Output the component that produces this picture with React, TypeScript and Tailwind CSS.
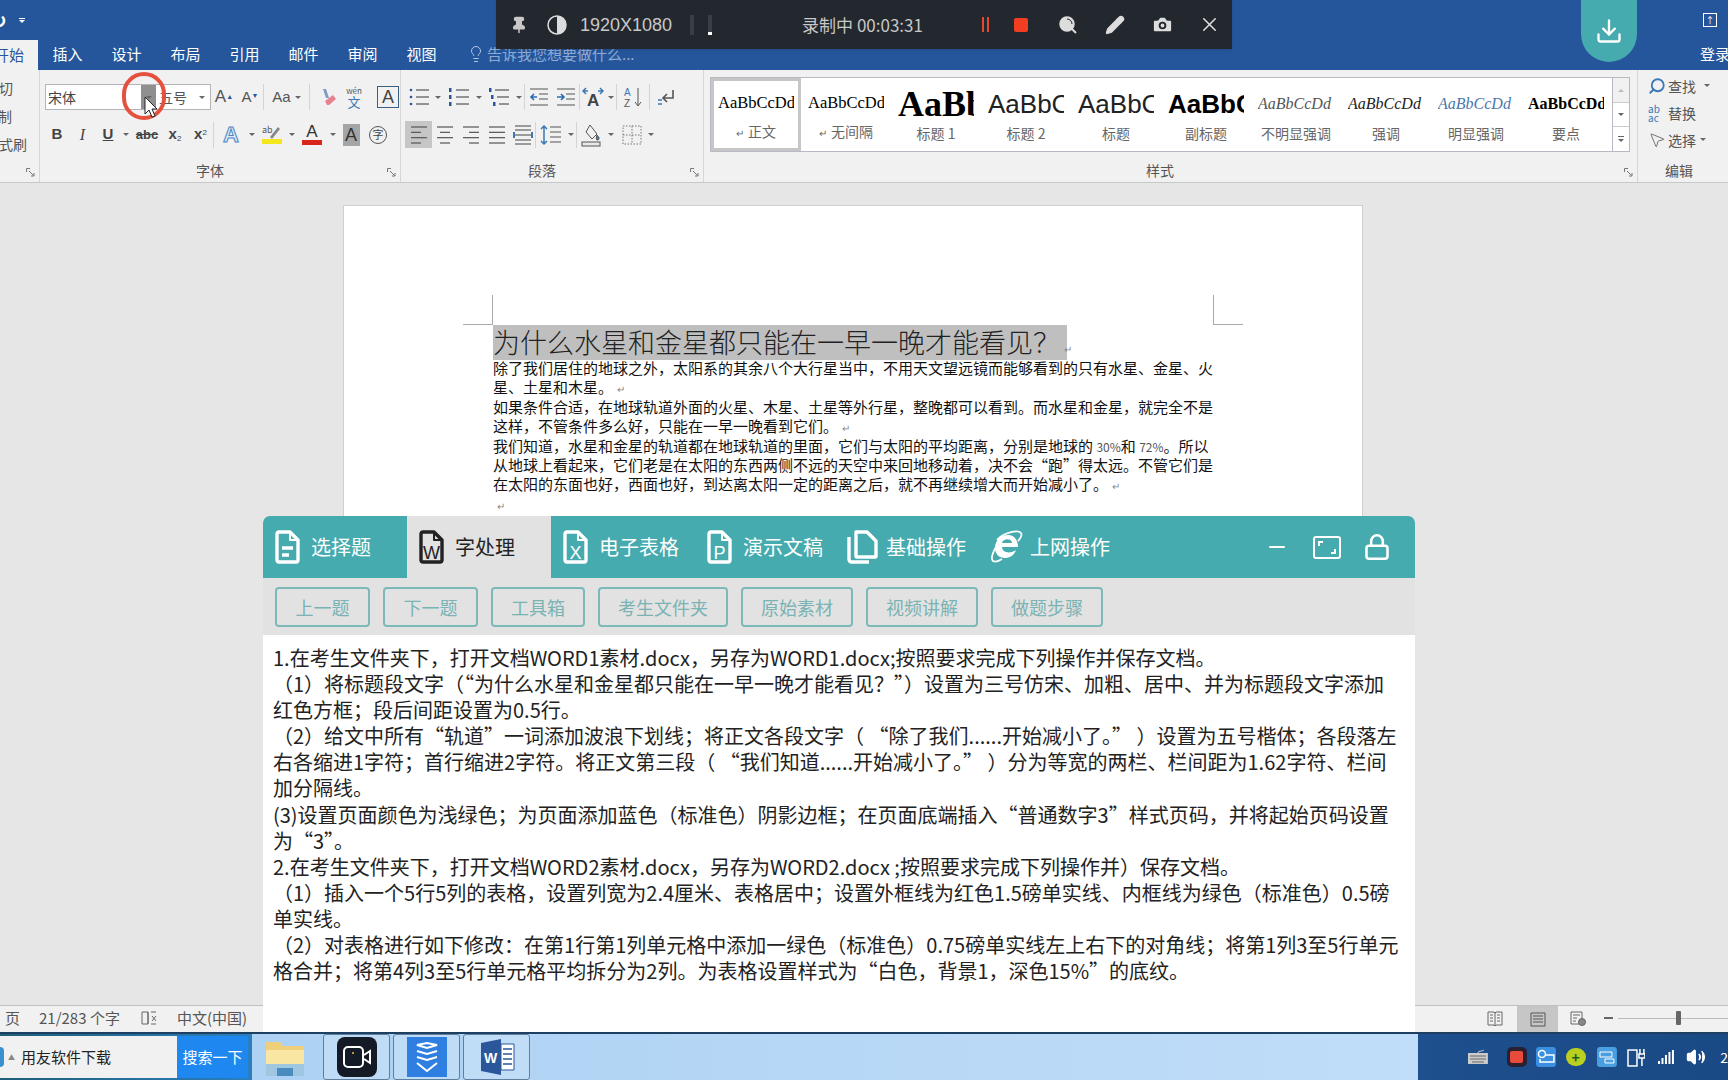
import type { ReactNode } from "react";
import { Search, Pencil, Camera, X, Lightbulb, Minus, Lock, Download, MousePointer2, Pin, Volume2 } from "lucide-react";

const CJK = "font-['Noto_Sans_CJK_SC','Liberation_Sans',sans-serif]";

function Cell({ w, children, className = "" }: { w: string; children?: ReactNode; className?: string }) {
  return <span className={`flex h-full shrink-0 items-center justify-center ${w} ${className}`}>{children}</span>;
}

function Caret({ className = "" }: { className?: string }) {
  return <span className={`inline-block h-0 w-0 border-x-[3px] border-t-[3px] border-x-transparent border-t-[#666] ${className}`} />;
}

function Sep() {
  return <span className="h-[26px] w-px shrink-0 bg-[#d4d4d4]" />;
}

function Launcher() {
  return (
    <svg width="9" height="9" viewBox="0 0 9 9" fill="none" stroke="#777" strokeWidth="1" className="absolute bottom-[5px] right-[4px]">
      <path d="M.5 4V.5H4M3 3l4.5 4.500M8 5v3H5" />
    </svg>
  );
}

// horizontal text lines, used by the paragraph buttons
function Lines({ xs, color = "#555" }: { xs: [number, number][]; color?: string }) {
  const step = 16 / (xs.length - 1);
  return (
    <svg width="20" height="18" viewBox="0 0 20 18" stroke={color} strokeWidth="1.2">
      {xs.map(([a, b], i) => (
        <line key={i} x1={a} x2={b} y1={1 + i * step} y2={1 + i * step} />
      ))}
    </svg>
  );
}

function ListIcon({ kind }: { kind: "dot" | "num" | "multi" }) {
  return (
    <svg width="22" height="20" viewBox="0 0 22 20" stroke="#555" strokeWidth="1.2" fill="#2b579a">
      {[3, 10, 17].map((y, i) => (
        <g key={y}>
          <line x1={kind === "multi" ? 7 + i * 2 : 8} x2="21" y1={y} y2={y} />
          {kind === "dot" && <circle cx="3" cy={y} r="1.3" stroke="none" />}
          {kind !== "dot" && <rect x={1 + (kind === "multi" ? i * 2 : 0)} y={y - 2} width="2.5" height="4" stroke="none" />}
        </g>
      ))}
    </svg>
  );
}

function IndentIcon({ flip }: { flip?: boolean }) {
  return (
    <svg width="20" height="18" viewBox="0 0 20 18" stroke="#555" strokeWidth="1.2">
      <path d="M1 1h18M10 6h9M10 11h9M1 17h18" />
      <path d={flip ? "M1 9h6M5 6l3 3-3 3" : "M2 9h6M5 6L2 9l3 3"} stroke="#2b6cb0" strokeWidth="1.6" fill="none" />
    </svg>
  );
}

function FontGroup() {
  return (
    <div className="relative flex w-[361px] shrink-0 flex-col border-r border-[#d6d6d6] pl-[5px] pt-[14px]">
      <div className="flex h-[26px] items-center text-[#555]">
        <div className="flex h-[26px] w-[166px] border border-[#b4b4b4] bg-white">
          <span className="flex w-[95px] items-center pl-[2px] text-[14px] text-[#444]">宋体</span>
          <span className="flex w-[15px] items-center justify-center bg-[#8f8f8f]"><Caret className="border-t-[#333]" /></span>
          <span className="flex flex-1 items-center justify-between pl-[3px] pr-[5px] text-[14px] text-[#555]">五号<Caret /></span>
        </div>
        <Cell w="w-[26px]"><span className="font-['Liberation_Sans'] text-[17px]">A<sup className="text-[7px] text-[#2b579a]">▲</sup></span></Cell>
        <Cell w="w-[26px]"><span className="font-['Liberation_Sans'] text-[15px]">A<sup className="text-[7px] text-[#2b579a]">▼</sup></span></Cell>
        <Sep />
        <Cell w="w-[45px]"><span className="font-['Liberation_Sans'] text-[15px]">Aa</span><Caret className="ml-1" /></Cell>
        <Sep />
        <Cell w="w-[36px]">
          <svg width="20" height="20" viewBox="0 0 20 20"><path d="M5 2h3l3 9H8z" fill="#7a9cc6" /><path d="M7 14l8-6 3 4-7 6H9z" fill="#e9808f" /></svg>
        </Cell>
        <Cell w="w-[16px]">
          <span className="flex flex-col items-center leading-none"><span className="text-[8px] text-[#555]">wén</span><span className="text-[13px] text-[#3b78b5]">文</span></span>
        </Cell>
        <Cell w="w-[15px]" />
        <span className="flex h-[22px] w-[22px] items-center justify-center border border-[#3a5f80] font-['Liberation_Sans'] text-[18px] leading-none text-[#444]">A</span>
      </div>
      <div className="mt-[11px] flex h-[27px] items-center text-[#444]">
        <Cell w="w-[24px]"><b className="font-['Liberation_Sans'] text-[15px]">B</b></Cell>
        <Cell w="w-[27px]"><i className="font-['Liberation_Serif'] text-[16px]">I</i></Cell>
        <Cell w="w-[24px]"><span className="font-['Liberation_Sans'] text-[15px] font-bold underline">U</span></Cell>
        <Cell w="w-[12px]"><Caret /></Cell>
        <Cell w="w-[30px]"><span className="font-['Liberation_Sans'] text-[13px] font-bold line-through">abc</span></Cell>
        <Cell w="w-[26px]"><b className="font-['Liberation_Sans'] text-[15px]">x<sub className="text-[8px] font-normal">2</sub></b></Cell>
        <Cell w="w-[25px]"><b className="font-['Liberation_Sans'] text-[15px]">x<sup className="text-[8px] font-normal">2</sup></b></Cell>
        <Sep />
        <Cell w="w-[34px]"><span className="font-['Liberation_Sans'] text-[22px] font-bold leading-none text-[#dfeaf6] [-webkit-text-stroke:1px_#4a86c5]">A</span></Cell>
        <Cell w="w-[8px]"><Caret /></Cell>
        <Cell w="w-[32px]">
          <span className="flex flex-col items-center leading-none">
            <svg width="20" height="14" viewBox="0 0 20 14"><path d="M8 12l8-10 2 2-8 10z" fill="#888" /><text x="0" y="8" fontSize="9" fill="#555">ab</text></svg>
            <span className="h-[5px] w-[20px] bg-[#f5e71e]" />
          </span>
        </Cell>
        <Cell w="w-[8px]"><Caret /></Cell>
        <Cell w="w-[32px]">
          <span className="flex flex-col items-center leading-none">
            <span className="font-['Liberation_Sans'] text-[17px] leading-[16px] text-[#333]">A</span>
            <span className="h-[5px] w-[20px] bg-[#d9241c]" />
          </span>
        </Cell>
        <Cell w="w-[10px]"><Caret /></Cell>
        <Cell w="w-[26px]"><span className="flex h-[22px] w-[17px] items-center justify-center bg-[#a5a5a5] font-['Liberation_Sans'] text-[18px] leading-none text-[#333]">A</span></Cell>
        <Cell w="w-[28px]"><span className="flex h-[18px] w-[18px] items-center justify-center rounded-full border border-[#555] text-[11px] leading-none">字</span></Cell>
      </div>
      <span className="absolute bottom-[2px] left-[156px] text-[14px] leading-5 text-[#555]">字体</span>
      <Launcher />
    </div>
  );
}

function ParagraphGroup() {
  return (
    <div className="relative flex w-[303px] shrink-0 flex-col border-r border-[#d6d6d6] pl-[5px] pt-[14px]">
      <div className="flex h-[26px] items-center">
        <Cell w="w-[26px]"><ListIcon kind="dot" /></Cell>
        <Cell w="w-[12px]"><Caret /></Cell>
        <Cell w="w-[30px]"><ListIcon kind="num" /></Cell>
        <Cell w="w-[10px]"><Caret /></Cell>
        <Cell w="w-[30px]"><ListIcon kind="multi" /></Cell>
        <Cell w="w-[10px]"><Caret /></Cell>
        <Sep />
        <Cell w="w-[28px]"><IndentIcon /></Cell>
        <Cell w="w-[26px]"><IndentIcon flip /></Cell>
        <Sep />
        <Cell w="w-[26px]">
          <svg width="22" height="20" viewBox="0 0 22 20"><path d="M1 4h5M16 4h5M4 1L1 4l3 3M18 1l3 3-3 3" stroke="#3b78b5" strokeWidth="1.5" fill="none" /><text x="5" y="19" fontSize="17" fontWeight="700" fill="#444" fontFamily="Liberation Sans">A</text></svg>
        </Cell>
        <Cell w="w-[10px]"><Caret /></Cell>
        <Sep />
        <Cell w="w-[32px]">
          <svg width="22" height="22" viewBox="0 0 22 22"><text x="2" y="10" fontSize="10" fill="#3b78b5" fontFamily="Liberation Sans">A</text><text x="2" y="21" fontSize="10" fill="#555" fontFamily="Liberation Sans">Z</text><path d="M16 2v17M13 16l3 4 3-4" stroke="#555" fill="none" /></svg>
        </Cell>
        <Sep />
        <Cell w="w-[32px]">
          <svg width="20" height="18" viewBox="0 0 20 18" fill="none" stroke="#555" strokeWidth="1.6"><path d="M17 2v8H8M11 6l-4 4 4 4" /><path d="M2 12h4M2 16h4" stroke="#3b78b5" /></svg>
        </Cell>
      </div>
      <div className="-ml-[1px] mt-[11px] flex h-[27px] items-center">
        <Cell w="w-[27px]" className="bg-[#c6c6c6]"><Lines xs={[[2, 18], [2, 12], [2, 18], [2, 12]]} /></Cell>
        <Cell w="w-[25px]"><Lines xs={[[2, 18], [5, 15], [2, 18], [5, 15]]} /></Cell>
        <Cell w="w-[27px]"><Lines xs={[[2, 18], [8, 18], [2, 18], [8, 18]]} /></Cell>
        <Cell w="w-[26px]"><Lines xs={[[2, 18], [2, 18], [2, 18], [2, 18]]} /></Cell>
        <Cell w="w-[25px]">
          <svg width="20" height="22" viewBox="0 0 20 22" stroke="#444" fill="none"><path d="M2 2h16M2 6h16M2 16h16M2 20h16M2 11h16" /><path d="M1 8v6M19 8v6" stroke="#3b78b5" strokeWidth="2" /></svg>
        </Cell>
        <Sep />
        <Cell w="w-[30px]">
          <svg width="22" height="22" viewBox="0 0 22 22" fill="none" stroke="#555"><path d="M10 3h11M10 8h11M10 13h11M10 18h11" /><path d="M4 2v18M1 5l3-3 3 3M1 17l3 3 3-3" stroke="#3b78b5" strokeWidth="1.5" /></svg>
        </Cell>
        <Cell w="w-[10px]"><Caret /></Cell>
        <Sep />
        <Cell w="w-[28px]">
          <svg width="22" height="24" viewBox="0 0 22 24" fill="none" stroke="#555"><path d="M10 2l7 9-5 5-6-7z" /><path d="M17 12c2 2 3 4 1 5s-2-3-1-5" fill="#3b78b5" /><rect x="2" y="19" width="18" height="4" fill="#e8e8e8" /></svg>
        </Cell>
        <Cell w="w-[12px]"><Caret /></Cell>
        <Cell w="w-[30px]">
          <svg width="20" height="20" viewBox="0 0 20 20" stroke="#777" strokeDasharray="1.5 1.5" fill="none"><rect x="1" y="1" width="18" height="18" /><path d="M1 10h18M10 1v18" /></svg>
        </Cell>
        <Cell w="w-[8px]"><Caret /></Cell>
      </div>
      <span className="absolute bottom-[2px] left-[127px] text-[14px] leading-5 text-[#555]">段落</span>
      <Launcher />
    </div>
  );
}

const styles = [
  { sample: "AaBbCcDd", name: "正文", mark: true, cls: "font-['Liberation_Serif'] text-[16.5px] text-black" },
  { sample: "AaBbCcDd", name: "无间隔", mark: true, cls: "font-['Liberation_Serif'] text-[16.5px] text-black" },
  { sample: "AaBbCc", name: "标题 1", cls: "font-['Liberation_Serif'] text-[36px] font-bold text-black" },
  { sample: "AaBbCc", name: "标题 2", cls: "font-['Liberation_Sans'] text-[26px] text-[#222]" },
  { sample: "AaBbCc", name: "标题", cls: "font-['Liberation_Sans'] text-[26px] text-[#222]" },
  { sample: "AaBbCc", name: "副标题", cls: "font-['Liberation_Sans'] text-[26px] font-bold text-black" },
  { sample: "AaBbCcDd", name: "不明显强调", cls: "font-['Liberation_Serif'] text-[16px] italic text-[#555]" },
  { sample: "AaBbCcDd", name: "强调", cls: "font-['Liberation_Serif'] text-[16px] italic text-[#222]" },
  { sample: "AaBbCcDd", name: "明显强调", cls: "font-['Liberation_Serif'] text-[16px] italic text-[#4a78ae]" },
  { sample: "AaBbCcDd", name: "要点", cls: "font-['Liberation_Serif'] text-[16px] font-bold text-black" },
];

function StylesGroup() {
  return (
    <div className="relative flex w-[934px] shrink-0 flex-col border-r border-[#d6d6d6] pl-[6px] pt-[7px]">
      <div className="flex h-[75px] w-[920px] border border-[#b9b9c4] bg-white">
        <div className="flex w-[902px]">
          {styles.map((s, i) => (
            <div key={s.name} className={`flex h-full w-[90px] shrink-0 flex-col items-center justify-between overflow-hidden pb-[8px] pt-[8px] ${i === 0 ? "border-[3px] border-[#c6c6c6] !pt-[5px] !pb-[5px]" : ""}`}>
              <span className={`flex h-[36px] w-[76px] items-center overflow-hidden whitespace-nowrap ${s.cls}`}>{s.sample}</span>
              <span className="whitespace-nowrap text-[14px] leading-5 text-[#666]">{s.mark && <span className="mr-1 text-[10px]">↵</span>}{s.name}</span>
            </div>
          ))}
        </div>
        <div className="flex w-[17px] flex-col border-l border-[#b9b9c4] text-[#777]">
          <span className="flex h-[25px] items-center justify-center border-b border-[#ccc] bg-[#f1f1f1]"><Caret className="rotate-180 border-t-[#bbb]" /></span>
          <span className="flex h-[24px] items-center justify-center border-b border-[#ccc]"><Caret /></span>
          <span className="flex flex-1 flex-col items-center justify-center gap-[2px]"><span className="h-px w-[6px] bg-[#666]" /><Caret /></span>
        </div>
      </div>
      <span className="absolute bottom-[2px] left-[442px] text-[14px] leading-5 text-[#555]">样式</span>
      <Launcher />
    </div>
  );
}

function EditGroup() {
  return (
    <div className="relative flex flex-1 flex-col pl-[10px] pt-[2px] text-[14px] leading-5 text-[#555]">
      <div className="flex h-[27px] items-center gap-[2px]"><Search size={18} className="-scale-x-100 text-[#3b78b5]" strokeWidth={2.4} />查找<Caret className="ml-[6px]" /></div>
      <div className="flex h-[27px] items-center gap-[2px]"><span className="w-[18px] text-[10px] leading-[9px] text-[#3b78b5]">ab<br />ac</span>替换</div>
      <div className="flex h-[27px] items-center gap-[2px]"><MousePointer2 size={18} strokeWidth={1.2} className="text-[#666]" />选择<Caret className="ml-[2px]" /></div>
      <span className="absolute bottom-[2px] left-[27px]">编辑</span>
    </div>
  );
}

function TitleBar() {
  return (
    <div className="h-[70px] shrink-0 bg-[#25569b] text-white">
      <div className="flex h-[40px] items-center justify-between">
        <div className="flex items-center">
          <span className="-ml-[10px] text-[20px] font-bold leading-none">↻</span>
          <span className="ml-[12px] flex flex-col items-center gap-[1px]"><span className="h-px w-[6px] bg-white" /><Caret className="border-t-white" /></span>
        </div>
        <span className="mr-[11px] flex h-[14px] w-[14px] items-center justify-center border border-white text-[9px] leading-none">↑</span>
      </div>
      <div className="flex h-[30px] items-center pb-[2px] text-[15px] leading-5">
        <span className="-mb-[2px] flex h-[30px] w-[38px] items-center justify-end overflow-hidden whitespace-nowrap bg-[#f1f1f1] pr-[14px] text-[#2b579a]">开始</span>
        {["插入", "设计", "布局", "引用", "邮件", "审阅", "视图"].map((t) => (
          <span key={t} className="flex w-[59px] shrink-0 justify-center">{t}</span>
        ))}
        <Lightbulb size={18} strokeWidth={1.3} className="ml-[16px] text-[#b8cbe4]" />
        <span className="ml-[2px] text-[#8eabd4]">告诉我您想要做什么...</span>
        <span className="ml-auto -mr-[2px] whitespace-nowrap">登录</span>
      </div>
    </div>
  );
}

function Recorder() {
  return (
    <div className="absolute left-[496px] top-0 flex h-[49px] w-[736px] items-center bg-[#23272e] text-[#c8c8c8] shadow-sm">
      <Pin size={18} className="ml-[14px] rotate-0 fill-[#c8c8c8]" />
      <svg width="20" height="20" viewBox="0 0 20 20" className="ml-[19px]"><circle cx="10" cy="10" r="9" fill="none" stroke="#ddd" strokeWidth="1.5" /><path d="M10 1a9 9 0 0 1 0 18z" fill="#ddd" /></svg>
      <span className="ml-[13px] font-['Liberation_Sans'] text-[18px] leading-none">1920X1080</span>
      <span className="ml-[18px] h-[20px] w-[4px] bg-[#3a3e45]" />
      <span className="ml-[14px] flex h-[20px] w-[4px] items-end bg-[#3a3e45]"><span className="h-[3px] w-full bg-white" /></span>
      <span className="ml-[90px] whitespace-nowrap text-[17px] leading-none">录制中 00:03:31</span>
      <span className="ml-[59px] flex gap-[3px]"><span className="h-[15px] w-[2px] bg-[#e8482f]" /><span className="h-[15px] w-[2px] bg-[#e8482f]" /></span>
      <span className="ml-[25px] h-[14px] w-[14px] rounded-[2px] bg-[#f13d22]" />
      <svg width="20" height="20" viewBox="0 0 20 20" className="ml-[30px]"><circle cx="9" cy="9" r="7" fill="#ddd" stroke="#ddd" strokeWidth="1.5" /><path d="M9 4a5 5 0 0 1 5 5" fill="none" stroke="#23272e" strokeWidth="1" /><path d="M14 14l4 4" stroke="#ddd" strokeWidth="2" /></svg>
      <Pencil size={20} className="ml-[27px] fill-[#ddd] text-[#ddd]" />
      <Camera size={23} className="ml-[26px] fill-[#ddd] text-[#23272e]" />
      <X size={23} strokeWidth={1.6} className="ml-[24px] text-[#ddd]" />
    </div>
  );
}

function TabIcon({ letter, wide }: { letter?: string; wide?: boolean }) {
  return (
    <svg width={wide ? 31 : 25} height="34" viewBox={wide ? "0 0 31 34" : "0 0 25 34"} fill="none" stroke="currentColor" strokeWidth="3.4" strokeLinejoin="round" className={wide ? "-ml-[4px] -mr-[3px]" : ""}>
      {wide && <path d="M2 7v22q0 3 3 3h17" />}
      <path d={wide ? "M9 2h11l9 9v15q0 1-1 1H10q-1 0-1-1z" : "M4 2h11l8 8v20q0 2-2 2H4q-2 0-2-2V4q0-2 2-2z"} />
      {!wide && <path d="M15 2v8h8" strokeWidth="2" />}
      {!letter && !wide && <path d="M7 18h11M7 25h7" />}
      {letter && <text x="12.5" y="29" textAnchor="middle" fontSize="18" fontFamily="Liberation Sans" fill="currentColor" stroke="none">{letter}</text>}
    </svg>
  );
}

const tabs = [
  { label: "选择题" },
  { label: "字处理", letter: "W", active: true },
  { label: "电子表格", letter: "X" },
  { label: "演示文稿", letter: "P" },
  { label: "基础操作", wide: true },
  { label: "上网操作", ie: true },
];

function Panel() {
  return (
    <div className={`absolute left-[263px] top-[516px] flex h-[516px] w-[1152px] flex-col ${CJK}`}>
      <div className="flex h-[62px] shrink-0 overflow-hidden rounded-t-[7px] bg-[#46abae] text-white">
        {tabs.map((t) => (
          <div key={t.label} className={`flex w-[144px] shrink-0 items-center gap-[11px] pl-[12px] text-[20px] leading-none ${t.active ? "bg-[#e2e2e2] text-[#222]" : ""}`}>
            {t.ie ? (
              <svg width="32" height="34" viewBox="0 0 32 34" className="-ml-[4px] -mr-[4px] shrink-0">
                <path d="M4 18C4 9 11 5 17 5c7 0 10 6 10 12H11c0 6 9 7 14 3-2 6-7 8-11 8C8 28 4 24 4 18zM11 13h10c0-5-9-5-10 0z" fill="white" fillRule="evenodd" />
                <path d="M6 10C12 3 27-1 30 3c1.500 2-1 6-3 8M5 17c-4 7-5 12-3 14 2 1 6 0 9-2" fill="none" stroke="white" strokeWidth="1.800" />
              </svg>
            ) : (
              <TabIcon letter={t.letter} wide={t.wide} />
            )}
            <span className="whitespace-nowrap">{t.label}</span>
          </div>
        ))}
        <div className="flex flex-1 items-center justify-end gap-[24px] pr-[24px]">
          <Minus size={24} strokeWidth={2} />
          <svg width="28" height="23" viewBox="0 0 28 23" fill="none" stroke="white" strokeWidth="2"><rect x="1" y="1" width="26" height="21" rx="2" /><path d="M6 10V6h4M22 13v4h-4" /></svg>
          <Lock size={28} strokeWidth={2.2} className="-ml-[2px]" />
        </div>
      </div>
      <div className="flex h-[57px] shrink-0 items-start gap-[13px] bg-[#e2e2e2] pl-[12px] pt-[9px]">
        {[["上一题", "w-[95px]"], ["下一题", "w-[95px]"], ["工具箱", "w-[94px]"], ["考生文件夹", "w-[130px]"], ["原始素材", "w-[112px]"], ["视频讲解", "w-[112px]"], ["做题步骤", "w-[112px]"]].map(([t, w]) => (
          <button key={t} className={`flex h-[40px] items-center justify-center rounded-[4px] border-2 border-[#7db9b9] text-[18px] leading-none text-[#7ab3b3] ${w}`}>{t}</button>
        ))}
      </div>
      <div lang="zh-CN" className="flex-1 bg-white pl-[10px] pr-[8px] pt-[10px] text-[20px] leading-[26.1px] text-[#222]">
        <p>1.在考生文件夹下，打开文档WORD1素材.docx，另存为WORD1.docx;按照要求完成下列操作并保存文档。</p>
        <p>（1）将标题段文字（“为什么水星和金星都只能在一早一晚才能看见？”）设置为三号仿宋、加粗、居中、并为标题段文字添加<br />红色方框；段后间距设置为0.5行。</p>
        <p>（2）给文中所有“轨道”一词添加波浪下划线；将正文各段文字（ “除了我们......开始减小了。” ）设置为五号楷体；各段落左右各缩进1字符；首行缩进2字符。将正文第三段（ “我们知道......开始减小了。” ）分为等宽的两栏、栏间距为1.62字符、栏间<br />加分隔线。</p>
        <p>(3)设置页面颜色为浅绿色；为页面添加蓝色（标准色）阴影边框；在页面底端插入“普通数字3”样式页码，并将起始页码设置为“3”。</p>
        <p>2.在考生文件夹下，打开文档WORD2素材.docx，另存为WORD2.docx ;按照要求完成下列操作并）保存文档。</p>
        <p>（1）插入一个5行5列的表格，设置列宽为2.4厘米、表格居中；设置外框线为红色1.5磅单实线、内框线为绿色（标准色）0.5磅单实线。</p>
        <p>（2）对表格进行如下修改：在第1行第1列单元格中添加一绿色（标准色）0.75磅单实线左上右下的对角线；将第1列3至5行单元格合并；将第4列3至5行单元格平均拆分为2列。为表格设置样式为“白色，背景1，深色15%”的底纹。</p>
      </div>
    </div>
  );
}

function Doc() {
  const mark = <span className="ml-1 text-[10px] leading-none text-[#888]">↵</span>;
  return (
    <div className="min-h-0 flex-1 overflow-hidden bg-[#e6e6e6] pl-[343px] pt-[22px]">
      <div lang="zh-CN" className={`relative h-[900px] w-[1020px] border-x border-t border-[#d0d0d0] bg-white pl-[149px] pt-[119px] text-black ${CJK}`}>
        <span className="absolute left-[119px] top-[118px] h-px w-[30px] bg-[#aaa]" />
        <span className="absolute left-[148px] top-[89px] h-[29px] w-px bg-[#aaa]" />
        <span className="absolute left-[869px] top-[118px] h-px w-[30px] bg-[#aaa]" />
        <span className="absolute left-[869px] top-[89px] h-[29px] w-px bg-[#aaa]" />
        <div className="-mb-[2px] h-[35px] w-[574px] whitespace-nowrap bg-[#bfbfbf] text-[27px] font-light leading-[33px] text-[#222]">为什么水星和金星都只能在一早一晚才能看见？{mark}</div>
        <div className="relative w-[722px] text-[15px] leading-[19.4px] text-[#111]">
          <p>除了我们居住的地球之外，太阳系的其余八个大行星当中，不用天文望远镜而能够看到的只有水星、金星、火星、土星和木星。{mark}</p>
          <p>如果条件合适，在地球轨道外面的火星、木星、土星等外行星，整晚都可以看到。而水星和金星，就完全不是这样，不管条件多么好，只能在一早一晚看到它们。{mark}</p>
          <p>我们知道，水星和金星的轨道都在地球轨道的里面，它们与太阳的平均距离，分别是地球的 <span className="text-[12px] leading-none text-[#555]">30%</span>和 <span className="text-[12px] leading-none text-[#555]">72%</span>。所以从地球上看起来，它们老是在太阳的东西两侧不远的天空中来回地移动着，决不会“跑”得太远。不管它们是在太阳的东面也好，西面也好，到达离太阳一定的距离之后，就不再继续增大而开始减小了。{mark}</p>
          <p>{mark}</p>
        </div>
      </div>
    </div>
  );
}

function StatusBar() {
  return (
    <div className={`flex h-[27px] shrink-0 items-center border-t border-[#c0c0c0] bg-[#f1f1f1] pb-[2px] text-[15px] leading-5 text-[#555] ${CJK}`}>
      <span className="ml-[5px]">页</span>
      <span className="ml-[19px]">21/283 个字</span>
      <svg width="16" height="16" viewBox="0 0 16 16" fill="none" stroke="#666" className="ml-[21px]"><path d="M1 2h6v12H1zM7 2v12M10 2h5M10 14h5M11 6l4 5M15 6l-4 5" /></svg>
      <span className="ml-[20px]">中文(中国)</span>
      <svg width="16" height="15" viewBox="0 0 16 15" fill="none" stroke="#666" className="ml-[1240px]"><path d="M1 1h6l1 1 1-1h6v13H9l-1 1-1-1H1zM8 2v12M3 4h3M3 7h3M3 10h3M10 4h3M10 7h3M10 10h3" /></svg>
      <span className="-mb-[2px] ml-[14px] flex h-[26px] w-[41px] items-center justify-center bg-[#c6c6c6]">
        <svg width="16" height="15" viewBox="0 0 16 15" fill="none" stroke="#555"><path d="M1 1h14v13H1zM3 4h10M3 7h10M3 10h10" /></svg>
      </span>
      <svg width="16" height="15" viewBox="0 0 16 15" fill="none" stroke="#666" className="ml-[12px]"><path d="M1 1h11v12H1zM3 4h7M3 7h4M3 10h3" /><circle cx="12" cy="11" r="3.500" fill="#888" /></svg>
      <span className="ml-[18px] h-[2px] w-[9px] bg-[#666]" />
      <div className="relative ml-[5px] flex h-full flex-1 items-center">
        <span className="h-px w-full bg-[#bbb]" />
        <span className="absolute left-[58px] h-[14px] w-[5px] rounded-[1px] bg-[#666]" />
      </div>
    </div>
  );
}

function TaskBtn({ children }: { children: ReactNode }) {
  return <div className="flex h-full w-[67px] shrink-0 items-center justify-center rounded-[3px] border border-[#5f7f9f] bg-[#c6e0f8]/70">{children}</div>;
}

function Taskbar() {
  return (
    <div className={`flex h-[48px] shrink-0 items-center border-t-2 border-[#1d3f62] bg-gradient-to-r from-[#a9cff2] to-[#c5e0fa] ${CJK}`}>
      <div className="flex h-full w-[252px] shrink-0 items-center bg-gradient-to-r from-[#1e5f78] to-[#2b7fbf]">
        <div className="flex h-[42px] w-[248px]">
          <span className="flex w-[177px] items-center bg-[#f1f1f1] text-[15px] text-[#222]">
            <span className="h-[20px] w-[4px] rounded-r-full bg-[#3a8fd0]" />
            <span className="ml-[4px] mr-[6px] text-[7px] text-[#888]">▲</span>用友软件下载
          </span>
          <span className="flex flex-1 items-center justify-center bg-[#1e88f0] text-[15px] text-white">搜索一下</span>
        </div>
      </div>
      <svg width="44" height="42" viewBox="0 0 44 42" className="ml-[11px] mr-[16px] shrink-0">
        <path d="M3 6h14l3 4h21v29H3z" fill="#f0cf7a" />
        <path d="M3 14h38v25H3z" fill="#f9e6a2" />
        <path d="M3 28h38v12H3z" fill="#9fc7e0" />
        <path d="M14 32h16v8H14z" fill="#4a8cc0" />
      </svg>
      <div className="flex h-full items-center gap-[3px]">
        <TaskBtn>
          <span className="flex h-[40px] w-[40px] items-center justify-center rounded-[8px] bg-[#141a26]">
            <svg width="30" height="24" viewBox="0 0 30 24" fill="none" stroke="white" strokeWidth="2"><rect x="2" y="2" width="19" height="20" rx="4" /><path d="M22 10l6-4v12l-6-4" /><circle cx="11" cy="8" r="1" fill="#f4c542" stroke="none" /></svg>
          </span>
        </TaskBtn>
        <TaskBtn>
          <span className="flex h-[40px] w-[40px] items-center justify-center bg-[#2e7fe0]">
            <svg width="28" height="32" viewBox="0 0 28 32" fill="none" stroke="white" strokeWidth="2"><path d="M4 4l10-2 10 2-10 3zM4 10l10 3 10-3M4 16l10 3 10-3M4 22l10 8 10-8" /></svg>
          </span>
        </TaskBtn>
        <TaskBtn>
          <svg width="36" height="38" viewBox="0 0 36 38">
            <path d="M2 5L22 1v36L2 33z" fill="#2b579a" />
            <path d="M22 6h13v26H22z" fill="white" stroke="#2b579a" />
            <path d="M24 11h9M24 16h9M24 21h9M24 26h9" stroke="#2b579a" strokeWidth="1.500" />
            <text x="5" y="25" fill="white" fontSize="14" fontWeight="700" fontFamily="Liberation Sans">W</text>
          </svg>
        </TaskBtn>
      </div>
      <div className="ml-auto flex h-full w-[310px] items-center bg-gradient-to-r from-[#1e4f8e] to-[#1a4a85] pl-[50px] text-white">
        <svg width="20" height="16" viewBox="0 0 20 16" className="mr-[19px]"><path d="M0 4h20v11H0z" fill="#ccc" /><path d="M2 7h16M2 10h16M4 13h12" stroke="#666" /><path d="M10 4c0-3 4-1 6-3" stroke="#ccc" fill="none" /></svg>
        <span className="mr-[9px] flex h-[20px] w-[20px] items-center justify-center rounded-[5px] bg-[#2a2030]"><span className="h-[12px] w-[13px] rounded-[2px] bg-[#e84a3c]" /></span>
        <svg width="20" height="20" viewBox="0 0 20 20" className="mr-[10px]"><path d="M0 3q0-3 3-3h14q3 0 3 3v14q0 3-3 3H3q-3 0-3-3z" fill="#3a8fe0" /><circle cx="6" cy="7" r="3.500" fill="none" stroke="white" strokeWidth="1.500" /><path d="M10 8h8v7H4v-3" fill="none" stroke="white" strokeWidth="1.500" /></svg>
        <span className="mr-[11px] flex h-[18px] w-[20px] items-center justify-center rounded-full bg-[#b9d020] text-[14px] font-bold leading-none text-[#1a5a20]">+</span>
        <svg width="20" height="20" viewBox="0 0 20 20" className="mr-[10px]"><path d="M0 3q0-3 3-3h14q3 0 3 3v14q0 3-3 3H3q-3 0-3-3z" fill="#4a9fe0" /><path d="M3 5h12v5H3zM8 12h9v4H8z" fill="none" stroke="white" /></svg>
        <svg width="19" height="20" viewBox="0 0 19 20" fill="none" stroke="white" strokeWidth="1.500" className="mr-[13px]"><rect x="1" y="3" width="9" height="16" /><path d="M13 2v5M17 2v5M12 7h6v4h-6zM15 11v8" /></svg>
        <svg width="16" height="14" viewBox="0 0 16 14" fill="white" className="mr-[12px]"><path d="M0 11h2v3H0zM3.500 8h2v6h-2zM7 5h2v9H7zM10.500 2h2v12h-2zM14 0h2v14h-2z" /></svg>
        <Volume2 size={20} className="fill-white" />
        <span className="ml-[14px] text-[14px]">2</span>
      </div>
    </div>
  );
}

export default function App() {
  return (
    <div className={`relative flex h-[1080px] w-[1728px] flex-col overflow-hidden ${CJK}`}>
      <TitleBar />
      <div className="flex h-[113px] shrink-0 border-b border-[#c8c8c8] bg-[#f1f1f1]">
        <div className="relative flex w-[40px] shrink-0 flex-col gap-[8px] overflow-hidden border-r border-[#d6d6d6] pt-[8px] text-[14px] leading-5 text-[#555]">
          <span className="-ml-[1px]">切</span>
          <span className="-ml-[2px]">制</span>
          <span className="-ml-[1px]">式刷</span>
          <Launcher />
        </div>
        <FontGroup />
        <ParagraphGroup />
        <StylesGroup />
        <EditGroup />
      </div>
      <Doc />
      <StatusBar />
      <Taskbar />
      <Recorder />
      <div className="absolute left-[1581px] top-0 flex h-[62px] w-[56px] items-center justify-center rounded-b-[28px] bg-[#46abae] text-white">
        <Download size={28} strokeWidth={2} />
      </div>
      {/* red highlight around the font dropdown, with the pointer */}
      <div className="absolute left-[122px] top-[72px] h-[48px] w-[44px] rounded-full border-[4px] border-[#e4523f]" />
      <svg width="14" height="22" viewBox="0 0 14 22" className="absolute left-[144px] top-[96px]"><path d="M1 1v17l4-4 3 7 3-1-3-7h5z" fill="white" stroke="#222" /></svg>
      <Panel />
    </div>
  );
}
